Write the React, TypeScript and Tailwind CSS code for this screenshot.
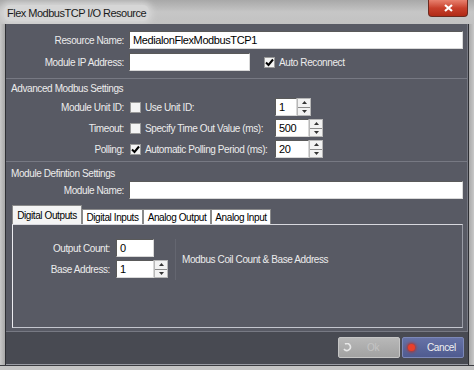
import React from "react";

function Field({ value, className }: { value?: string; className: string }) {
  return (
    <div
      className={`h-[18px] bg-white border border-t-[#5a5a5a] border-l-[#5a5a5a] border-r-[#d8d8d8] border-b-[#d8d8d8] text-[11px] leading-none text-black px-[3px] flex items-center whitespace-nowrap ${className}`}
    >
      {value}
    </div>
  );
}

function Spin({ value, className }: { value: string; className: string }) {
  return (
    <div className="flex h-[18px]">
      <Field value={value} className={className} />
      <div className="w-[14px] h-[18px] flex flex-col bg-[#f2f2f2] border border-[#b8b8b8]">
        <div className="flex-1 flex items-center justify-center border-b border-[#8a8a8a]">
          <svg width="5" height="3" viewBox="0 0 5 3">
            <path d="M0 3 L2.5 0 L5 3 Z" fill="#333" />
          </svg>
        </div>
        <div className="flex-1 flex items-center justify-center">
          <svg width="5" height="3" viewBox="0 0 5 3">
            <path d="M0 0 L2.5 3 L5 0 Z" fill="#333" />
          </svg>
        </div>
      </div>
    </div>
  );
}

function Check({ checked }: { checked?: boolean }) {
  return (
    <div className="w-[11px] h-[11px] bg-[#f4f4f4] border border-[#9a9a9a] flex items-center justify-center shrink-0">
      {checked && (
        <svg width="9" height="9" viewBox="0 0 9 9">
          <path d="M1 4.5 L3.5 7 L8 1.5" stroke="#000" strokeWidth="2" fill="none" />
        </svg>
      )}
    </div>
  );
}

function Label({ text, className }: { text: string; className: string }) {
  return <div className={`text-right text-[10px] text-[#ececec] shrink-0 whitespace-nowrap ${className}`}>{text}</div>;
}

function Tab({ text, active, className }: { text: string; active?: boolean; className: string }) {
  return (
    <div
      className={`flex items-center justify-center text-[10px] text-black border border-[#8a8a8a] border-b-0 whitespace-nowrap ${
        active ? "h-[19px] bg-[#f4f4f4]" : "h-[15px] bg-white"
      } ${className}`}
    >
      {text}
    </div>
  );
}

export default function App() {
  return (
    <div className="w-[474px] h-[370px] flex flex-col bg-[#bdbdbd] font-['Liberation_Sans',Arial,sans-serif] tracking-[-0.4px] overflow-hidden">
      {/* Title bar */}
      <div className="h-[24px] shrink-0 flex items-start bg-gradient-to-b from-[#a8a8a8] via-[#c6c6c6] to-[#c2c2c2]">
        <div className="ml-[4px] mt-[5px] px-[3px] h-[16px] flex items-center rounded-[6px] bg-[#d6d6d6] shadow-[0_0_6px_3px_#d6d6d6] text-[11px] tracking-[-0.5px] text-[#1a1a1a] whitespace-nowrap">
          Flex ModbusTCP I/O Resource
        </div>
        <div className="flex-1" />
        <div className="mr-[6px] w-[40px] h-[17px] rounded-b-[4px] border border-t-0 border-[#6b2a20] bg-gradient-to-b from-[#e8806e] via-[#c8402c] to-[#b02a16] flex items-center justify-center">
          <svg width="9" height="8" viewBox="0 0 9 8">
            <path d="M1 1 L8 7 M8 1 L1 7" stroke="#fff" strokeWidth="2.2" />
          </svg>
        </div>
      </div>

      {/* Body */}
      <div className="flex-1 flex min-h-0">
        <div className="w-[5px] shrink-0 bg-gradient-to-r from-[#c8c8c8] to-[#a8a8a8]" />
        <div className="w-[464px] flex flex-col border-l border-r border-[#2e2f34] bg-[#4e5058]">
          {/* Section 1 */}
          <div className="h-[55px] shrink-0 bg-[#585a64] border-b border-r border-[#777983] flex flex-col pt-[7px] gap-[4px]">
            <div className="flex items-center h-[18px]">
              <Label text="Resource Name:" className="w-[118px]" />
              <Field value="MedialonFlexModbusTCP1" className="ml-[5px] w-[334px] text-[10px]" />
            </div>
            <div className="flex items-center h-[18px]">
              <Label text="Module IP Address:" className="w-[118px]" />
              <Field className="ml-[5px] w-[121px]" />
              <div className="ml-[14px]">
                <Check checked />
              </div>
              <div className="ml-[4px] text-[10px] text-[#ececec] whitespace-nowrap">Auto Reconnect</div>
            </div>
          </div>

          {/* Section 2 */}
          <div className="h-[83px] shrink-0 bg-[#585a64] border-b border-r border-[#777983] flex flex-col">
            <div className="ml-[5px] mt-[3px] h-[13px] text-[10px] text-[#ececec] leading-[13px] whitespace-nowrap">Advanced Modbus Settings</div>
            <div className="mt-[3px] flex flex-col gap-[3px]">
              <div className="flex items-center h-[18px]">
                <Label text="Module Unit ID:" className="w-[118px]" />
                <div className="ml-[6px] w-[145px] flex items-center">
                  <Check />
                  <span className="ml-[4px] text-[10px] text-[#ececec] whitespace-nowrap">Use Unit ID:</span>
                </div>
                <Spin value="1" className="w-[22px]" />
              </div>
              <div className="flex items-center h-[18px]">
                <Label text="Timeout:" className="w-[118px]" />
                <div className="ml-[6px] w-[145px] flex items-center">
                  <Check />
                  <span className="ml-[4px] text-[10px] text-[#ececec] whitespace-nowrap">Specify Time Out Value (ms):</span>
                </div>
                <Spin value="500" className="w-[34px]" />
              </div>
              <div className="flex items-center h-[18px]">
                <Label text="Polling:" className="w-[118px]" />
                <div className="ml-[6px] w-[145px] flex items-center">
                  <Check checked />
                  <span className="ml-[4px] text-[10px] text-[#ececec] whitespace-nowrap">Automatic Polling Period (ms):</span>
                </div>
                <Spin value="20" className="w-[34px]" />
              </div>
            </div>
          </div>

          {/* Section 3 */}
          <div className="h-[170px] shrink-0 bg-[#585a64] border-b border-r border-[#777983] flex flex-col">
            <div className="ml-[5px] mt-[5px] h-[13px] text-[10px] text-[#ececec] leading-[13px] whitespace-nowrap">Module Defintion Settings</div>
            <div className="mt-[1px] flex items-center h-[18px]">
              <Label text="Module Name:" className="w-[118px]" />
              <Field className="ml-[5px] w-[334px]" />
            </div>
            <div className="mt-[6px] ml-[6px] flex items-end h-[19px]">
              <Tab text="Digital Outputs" active className="w-[70px]" />
              <Tab text="Digital Inputs" className="w-[61px]" />
              <Tab text="Analog Output" className="w-[68px]" />
              <Tab text="Analog Input" className="w-[60px]" />
            </div>
            <div className="ml-[6px] w-[451px] h-[104px] border border-t-[#d8d8de] border-l-[#ececf0] border-r-[#9a9ca6] border-b-[#c4c6ce] flex items-start pt-[14px]">
              <div className="flex flex-col gap-[3px]">
                <div className="flex items-center h-[18px]">
                  <Label text="Output Count:" className="w-[97px]" />
                  <Field value="0" className="ml-[6px] w-[38px]" />
                </div>
                <div className="flex items-center h-[18px]">
                  <Label text="Base Address:" className="w-[97px]" />
                  <div className="ml-[6px]">
                    <Spin value="1" className="w-[38px]" />
                  </div>
                </div>
              </div>
              <div className="ml-[7px] w-px h-[41px] bg-[#646670]" />
              <div className="ml-[6px] h-[41px] flex items-center text-[10px] text-[#ececec] whitespace-nowrap">
                Modbus Coil Count &amp; Base Address
              </div>
            </div>
          </div>

          {/* Bottom bar */}
          <div className="flex-1 bg-[#484a52] border-b border-[#9a9ca4] flex items-start justify-end pt-[5px] pr-[4px] gap-[2px]">
            <div className="w-[62px] h-[21px] rounded-[2px] border border-[#c6c6c6] bg-gradient-to-b from-[#b8b8b8] to-[#a2a2a2] flex items-center">
              <svg className="ml-[4px]" width="9" height="9" viewBox="0 0 9 9">
                <path d="M2 1 A3.5 3.5 0 1 1 1 6" stroke="#e8e8e8" strokeWidth="1.6" fill="none" />
              </svg>
              <span className="ml-[15px] text-[10px] text-[#c4c4c4]">Ok</span>
            </div>
            <div className="w-[62px] h-[21px] rounded-[2px] border border-[#7c88b8] bg-gradient-to-b from-[#6672a6] to-[#4f5b90] flex items-center">
              <div className="ml-[5px] w-[7px] h-[7px] rounded-full bg-[#e8402c] shadow-[0_0_3px_1px_#c03020]" />
              <span className="ml-[12px] text-[10px] text-[#f0f0f0]">Cancel</span>
            </div>
          </div>
        </div>
        <div className="flex-1 bg-gradient-to-r from-[#a8a8a8] to-[#c8c8c8]" />
      </div>
      <div className="h-[5px] shrink-0 bg-[#c4c4c4] border-t border-[#3a3b40]" />
    </div>
  );
}
